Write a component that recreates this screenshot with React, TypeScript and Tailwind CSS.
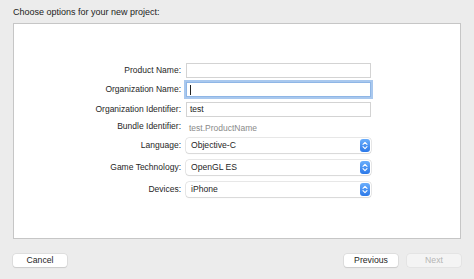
import React from "react";

const font = { fontFamily: '"Liberation Sans", Arial, sans-serif' };

function Stepper() {
  return (
    <span className="flex h-[13px] w-[10px] items-center justify-center rounded-[3px] bg-gradient-to-b from-[#6aaefc] to-[#2b78e8]">
      <svg width="6" height="9" viewBox="0 0 6 9" fill="none" stroke="white" strokeWidth="1.1" strokeLinecap="round" strokeLinejoin="round">
        <path d="M1 3.3 L3 1.3 L5 3.3" />
        <path d="M1 5.7 L3 7.7 L5 5.7" />
      </svg>
    </span>
  );
}

function Row({ label, children, className = "" }: { label: string; children: React.ReactNode; className?: string }) {
  return (
    <div className={`flex items-center ${className}`}>
      <div className="w-[172px] pr-[5px] text-right text-[8.5px] text-[#262626]">{label}</div>
      <div className="w-[185px]">{children}</div>
    </div>
  );
}

function TextField({ value = "", focused = false }: { value?: string; focused?: boolean }) {
  return (
    <div
      className={`flex h-[15px] items-center border px-[3px] text-[8.5px] text-[#222] ${
        focused ? "border-[#8fb6e6] ring-2 ring-[#a9c8ee]" : "border-[#d3d3d3]"
      } bg-white`}
    >
      {focused && <span className="h-[10px] w-px bg-[#222]" />}
      {value}
    </div>
  );
}

function Popup({ value }: { value: string }) {
  return (
    <div className="flex h-[15px] items-center justify-between rounded-[3px] bg-white pl-[5px] pr-px text-[8.6px] text-[#1e1e1e] shadow-[0_0_0_0.5px_#d0d0d0,0_1px_1px_rgba(0,0,0,0.12)]">
      <span>{value}</span>
      <Stepper />
    </div>
  );
}

function Button({ children, disabled = false }: { children: React.ReactNode; disabled?: boolean }) {
  return (
    <button
      className={`h-[13px] w-[54px] rounded-[3px] text-[8.7px] leading-none ${
        disabled
          ? "bg-[#f4f4f4] text-[#b4b4b4] shadow-[0_0_0_0.5px_#dcdcdc]"
          : "bg-white text-[#1e1e1e] shadow-[0_0_0_0.5px_#cfcfcf,0_1px_1px_rgba(0,0,0,0.15)]"
      }`}
    >
      {children}
    </button>
  );
}

export default function App() {
  return (
    <div className="flex h-[279px] w-[474px] flex-col bg-[#ececec] px-[13px]" style={font}>
      <div className="pt-[7px] text-[9px] leading-[11px] text-[#222]">Choose options for your new project:</div>
      <div className="mt-[5px] h-[216px] w-[448px] border border-[#c6c6c6] bg-white pt-[39px]">
        <Row label="Product Name:">
          <TextField />
        </Row>
        <Row label="Organization Name:" className="mt-[4px]">
          <TextField focused />
        </Row>
        <Row label="Organization Identifier:" className="mt-[5px]">
          <TextField value="test" />
        </Row>
        <Row label="Bundle Identifier:" className="mt-[2px] h-[14px]">
          <span className="pl-[3px] text-[8.5px] text-[#8a8a8a]">test.ProductName</span>
        </Row>
        <Row label="Language:" className="mt-[5px]">
          <Popup value="Objective-C" />
        </Row>
        <Row label="Game Technology:" className="mt-[7px]">
          <Popup value="OpenGL ES" />
        </Row>
        <Row label="Devices:" className="mt-[7px]">
          <Popup value="iPhone" />
        </Row>
      </div>
      <div className="mt-[15px] flex items-center">
        <Button>Cancel</Button>
        <div className="flex-1" />
        <Button>Previous</Button>
        <div className="w-[9px]" />
        <Button disabled>Next</Button>
      </div>
    </div>
  );
}
